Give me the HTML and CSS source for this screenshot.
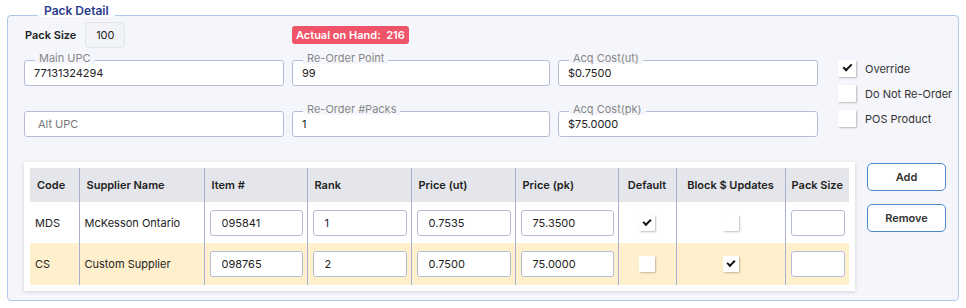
FILE: index.html
```html
<!DOCTYPE html>
<html lang="en">
<head>
    <meta charset="UTF-8">
    <meta name="viewport" content="width=device-width, initial-scale=1.0">
    <title>Pack Detail</title>
    <link rel="stylesheet" href="styles.css">
</head>
<body>

<!-- Pack detail panel -->
<fieldset class="pack-detail">
    <legend>Pack Detail</legend>

    <div class="form-grid">
        <div class="pack-size">
            <span class="pack-size-label">Pack Size</span>
            <span class="pack-size-value">100</span>
        </div>
        <div class="badge-cell">
            <span class="badge">Actual on Hand:&nbsp; 216</span>
        </div>

        <div class="checks">
            <label class="check-row"><span class="check checked"></span>Override</label>
            <label class="check-row"><span class="check"></span>Do Not Re-Order</label>
            <label class="check-row"><span class="check"></span>POS Product</label>
        </div>

        <div class="field row-2">
            <span class="field-label">Main UPC</span>
            <input type="text" value="77131324294">
        </div>
        <div class="field row-2">
            <span class="field-label">Re-Order Point</span>
            <input type="text" value="99">
        </div>
        <div class="field row-2">
            <span class="field-label">Acq Cost(ut)</span>
            <input type="text" value="$0.7500">
        </div>

        <div class="field row-3">
            <input type="text" class="placeholder-input" placeholder="Alt UPC">
        </div>
        <div class="field row-3">
            <span class="field-label">Re-Order #Packs</span>
            <input type="text" value="1">
        </div>
        <div class="field row-3">
            <span class="field-label">Acq Cost(pk)</span>
            <input type="text" value="$75.0000">
        </div>
    </div>

    <!-- Suppliers -->
    <div class="supplier-area">
        <div class="table-card">
            <table class="supplier-table">
                <colgroup>
                    <col style="width: 49px">
                    <col style="width: 125px">
                    <col style="width: 103px">
                    <col style="width: 104px">
                    <col style="width: 104px">
                    <col style="width: 103px">
                    <col style="width: 58px">
                    <col style="width: 109px">
                    <col style="width: 64px">
                </colgroup>
                <thead>
                    <tr>
                        <th>Code</th>
                        <th>Supplier Name</th>
                        <th>Item #</th>
                        <th>Rank</th>
                        <th>Price (ut)</th>
                        <th>Price (pk)</th>
                        <th class="center">Default</th>
                        <th class="center">Block $ Updates</th>
                        <th class="center">Pack Size</th>
                    </tr>
                </thead>
                <tbody>
                    <tr>
                        <td>MDS</td>
                        <td>McKesson Ontario</td>
                        <td><input type="text" value="095841"></td>
                        <td><input type="text" value="1"></td>
                        <td><input type="text" value="0.7535"></td>
                        <td><input type="text" value="75.3500"></td>
                        <td class="center"><span class="check small checked"></span></td>
                        <td class="center"><span class="check small faint"></span></td>
                        <td><input type="text" value=""></td>
                    </tr>
                    <tr class="custom">
                        <td>CS</td>
                        <td>Custom Supplier</td>
                        <td><input type="text" value="098765"></td>
                        <td><input type="text" value="2"></td>
                        <td><input type="text" value="0.7500"></td>
                        <td><input type="text" value="75.0000"></td>
                        <td class="center"><span class="check small"></span></td>
                        <td class="center"><span class="check small checked"></span></td>
                        <td><input type="text" value=""></td>
                    </tr>
                </tbody>
            </table>
        </div>

        <div class="actions">
            <button>Add</button>
            <button>Remove</button>
        </div>
    </div>
</fieldset>

</body>
</html>
```

FILE: styles.css
```css
/* General */
body, html {
    margin: 0;
    padding: 0;
    background-color: #ffffff;
    font-family: 'Inter', 'Noto Sans', sans-serif;
    font-size: 11px;
    color: #222;
}

body {
    padding: 4px 7px 0 7px;
}

/* Panel */
.pack-detail {
    margin: 0;
    width: 952px;
    box-sizing: border-box;
    padding: 0 0 9px 16px;
    border: 1px solid #adc9ea;
    border-radius: 4px;
    background-color: #f4f6fb;
}

/* Legend text sits a little above the border line */
.pack-detail legend {
    margin-left: 14px;
    padding: 0 6px 8px 6px;
    color: #2a3b8c;
    font-weight: 600;
    font-size: 12px;
    line-height: 14px;
    background: linear-gradient(#ffffff 60%, transparent 60%);
}

/* Top form */
.form-grid {
    display: grid;
    grid-template-columns: 260px 258px 260px 130px;
    column-gap: 8px;
    grid-template-rows: 26px 26px 39px;
    row-gap: 12px;
    margin-top: -4px;
}

.pack-size {
    grid-row: 1;
    grid-column: 1;
    display: flex;
    align-items: center;
    gap: 9px;
}

.badge-cell {
    grid-row: 1;
    grid-column: 2;
    padding-top: 4px;
}

.row-2 {
    grid-row: 2;
}

.row-3 {
    grid-row: 3;
    align-self: end;
}

.pack-size-label {
    font-weight: 600;
    padding-left: 1px;
}

.pack-size-value {
    display: inline-flex;
    align-items: center;
    justify-content: center;
    width: 40px;
    height: 26px;
    box-sizing: border-box;
    background-color: #f1f3f7;
    border: 1px solid #e2e5ec;
    border-radius: 4px;
    font-size: 11px;
}

.badge {
    display: inline-block;
    background-color: #ef5468;
    color: #fff;
    font-weight: 600;
    font-size: 11px;
    line-height: 18px;
    padding: 0 4px;
    border-radius: 3px;
}

.field {
    position: relative;
}

.field input {
    display: block;
    width: 100%;
    height: 26px;
    box-sizing: border-box;
    border: 1px solid #b7bcd6;
    border-radius: 3px;
    background-color: #fff;
    padding: 0 9px;
    font-family: inherit;
    font-size: 11px;
    color: #222;
}

.field input.placeholder-input {
    padding-left: 13px;
}

.field input::placeholder {
    color: #777;
}

/* Label sitting on the input border */
.field-label {
    position: absolute;
    left: 11px;
    top: -8px;
    padding: 0 4px;
    background-color: #f4f6fb;
    color: #888;
    font-size: 11px;
    line-height: 12px;
    z-index: 1;
}

/* Checkboxes */
.checks {
    grid-column: 4;
    grid-row: 2 / span 2;
    display: flex;
    flex-direction: column;
    gap: 8px;
    padding-left: 12px;
}

.check-row {
    display: flex;
    align-items: center;
    gap: 9px;
    height: 17px;
    color: #333;
    white-space: nowrap;
}

.check {
    display: inline-block;
    position: relative;
    flex: none;
    width: 18px;
    height: 17px;
    background-color: #fff;
    box-shadow: 1px 1px 2px rgba(0, 0, 0, 0.25);
    border-radius: 1px;
}

.check.small {
    width: 16px;
    height: 16px;
    vertical-align: middle;
}

.check.faint {
    background-color: transparent;
}

.check.checked::after {
    content: "";
    position: absolute;
    left: 5px;
    top: 4px;
    width: 7px;
    height: 3px;
    border-left: 2px solid #111;
    border-bottom: 2px solid #111;
    transform: rotate(-45deg);
}

.check.small.checked::after {
    left: 4px;
    top: 4px;
    width: 6px;
    height: 3px;
}

/* Supplier table */
.supplier-area {
    display: flex;
    align-items: flex-start;
    gap: 12px;
    margin-top: 25px;
}

.table-card {
    background-color: #fff;
    padding: 6px;
    box-shadow: 0 1px 4px rgba(0, 0, 0, 0.15);
}

.supplier-table {
    border-collapse: collapse;
    table-layout: fixed;
    width: 819px;
}

.supplier-table th {
    background-color: #e4e6eb;
    height: 34px;
    padding: 0 0 0 7px;
    text-align: left;
    font-weight: 600;
    font-size: 11px;
}

.supplier-table th.center {
    text-align: center;
    padding: 0;
}

.supplier-table td {
    height: 41px;
    padding: 0 0 0 5px;
}

.supplier-table td:nth-child(3),
.supplier-table td:nth-child(4),
.supplier-table td:nth-child(5),
.supplier-table td:nth-child(6),
.supplier-table td:nth-child(9) {
    padding: 0 4px 0 5px;
}

.supplier-table td.center {
    text-align: center;
    padding: 0;
}

.supplier-table th + th,
.supplier-table td + td {
    border-left: 1px solid #aab0d4;
}

.supplier-table tr.custom td {
    background-color: #fff0cd;
    height: 42px;
}

.supplier-table input {
    width: 100%;
    height: 26px;
    box-sizing: border-box;
    border: 1px solid #b7bcd6;
    border-radius: 3px;
    background-color: #fff;
    padding: 0 11px;
    font-family: inherit;
    font-size: 11px;
    color: #222;
}

/* Buttons */
.actions {
    display: flex;
    flex-direction: column;
    gap: 13px;
    margin-top: 1px;
}

.actions button {
    width: 79px;
    height: 28px;
    background-color: #fff;
    border: 1px solid #4b88cc;
    border-radius: 5px;
    font-family: inherit;
    font-weight: 600;
    font-size: 11px;
    color: #333;
    cursor: pointer;
}
```
